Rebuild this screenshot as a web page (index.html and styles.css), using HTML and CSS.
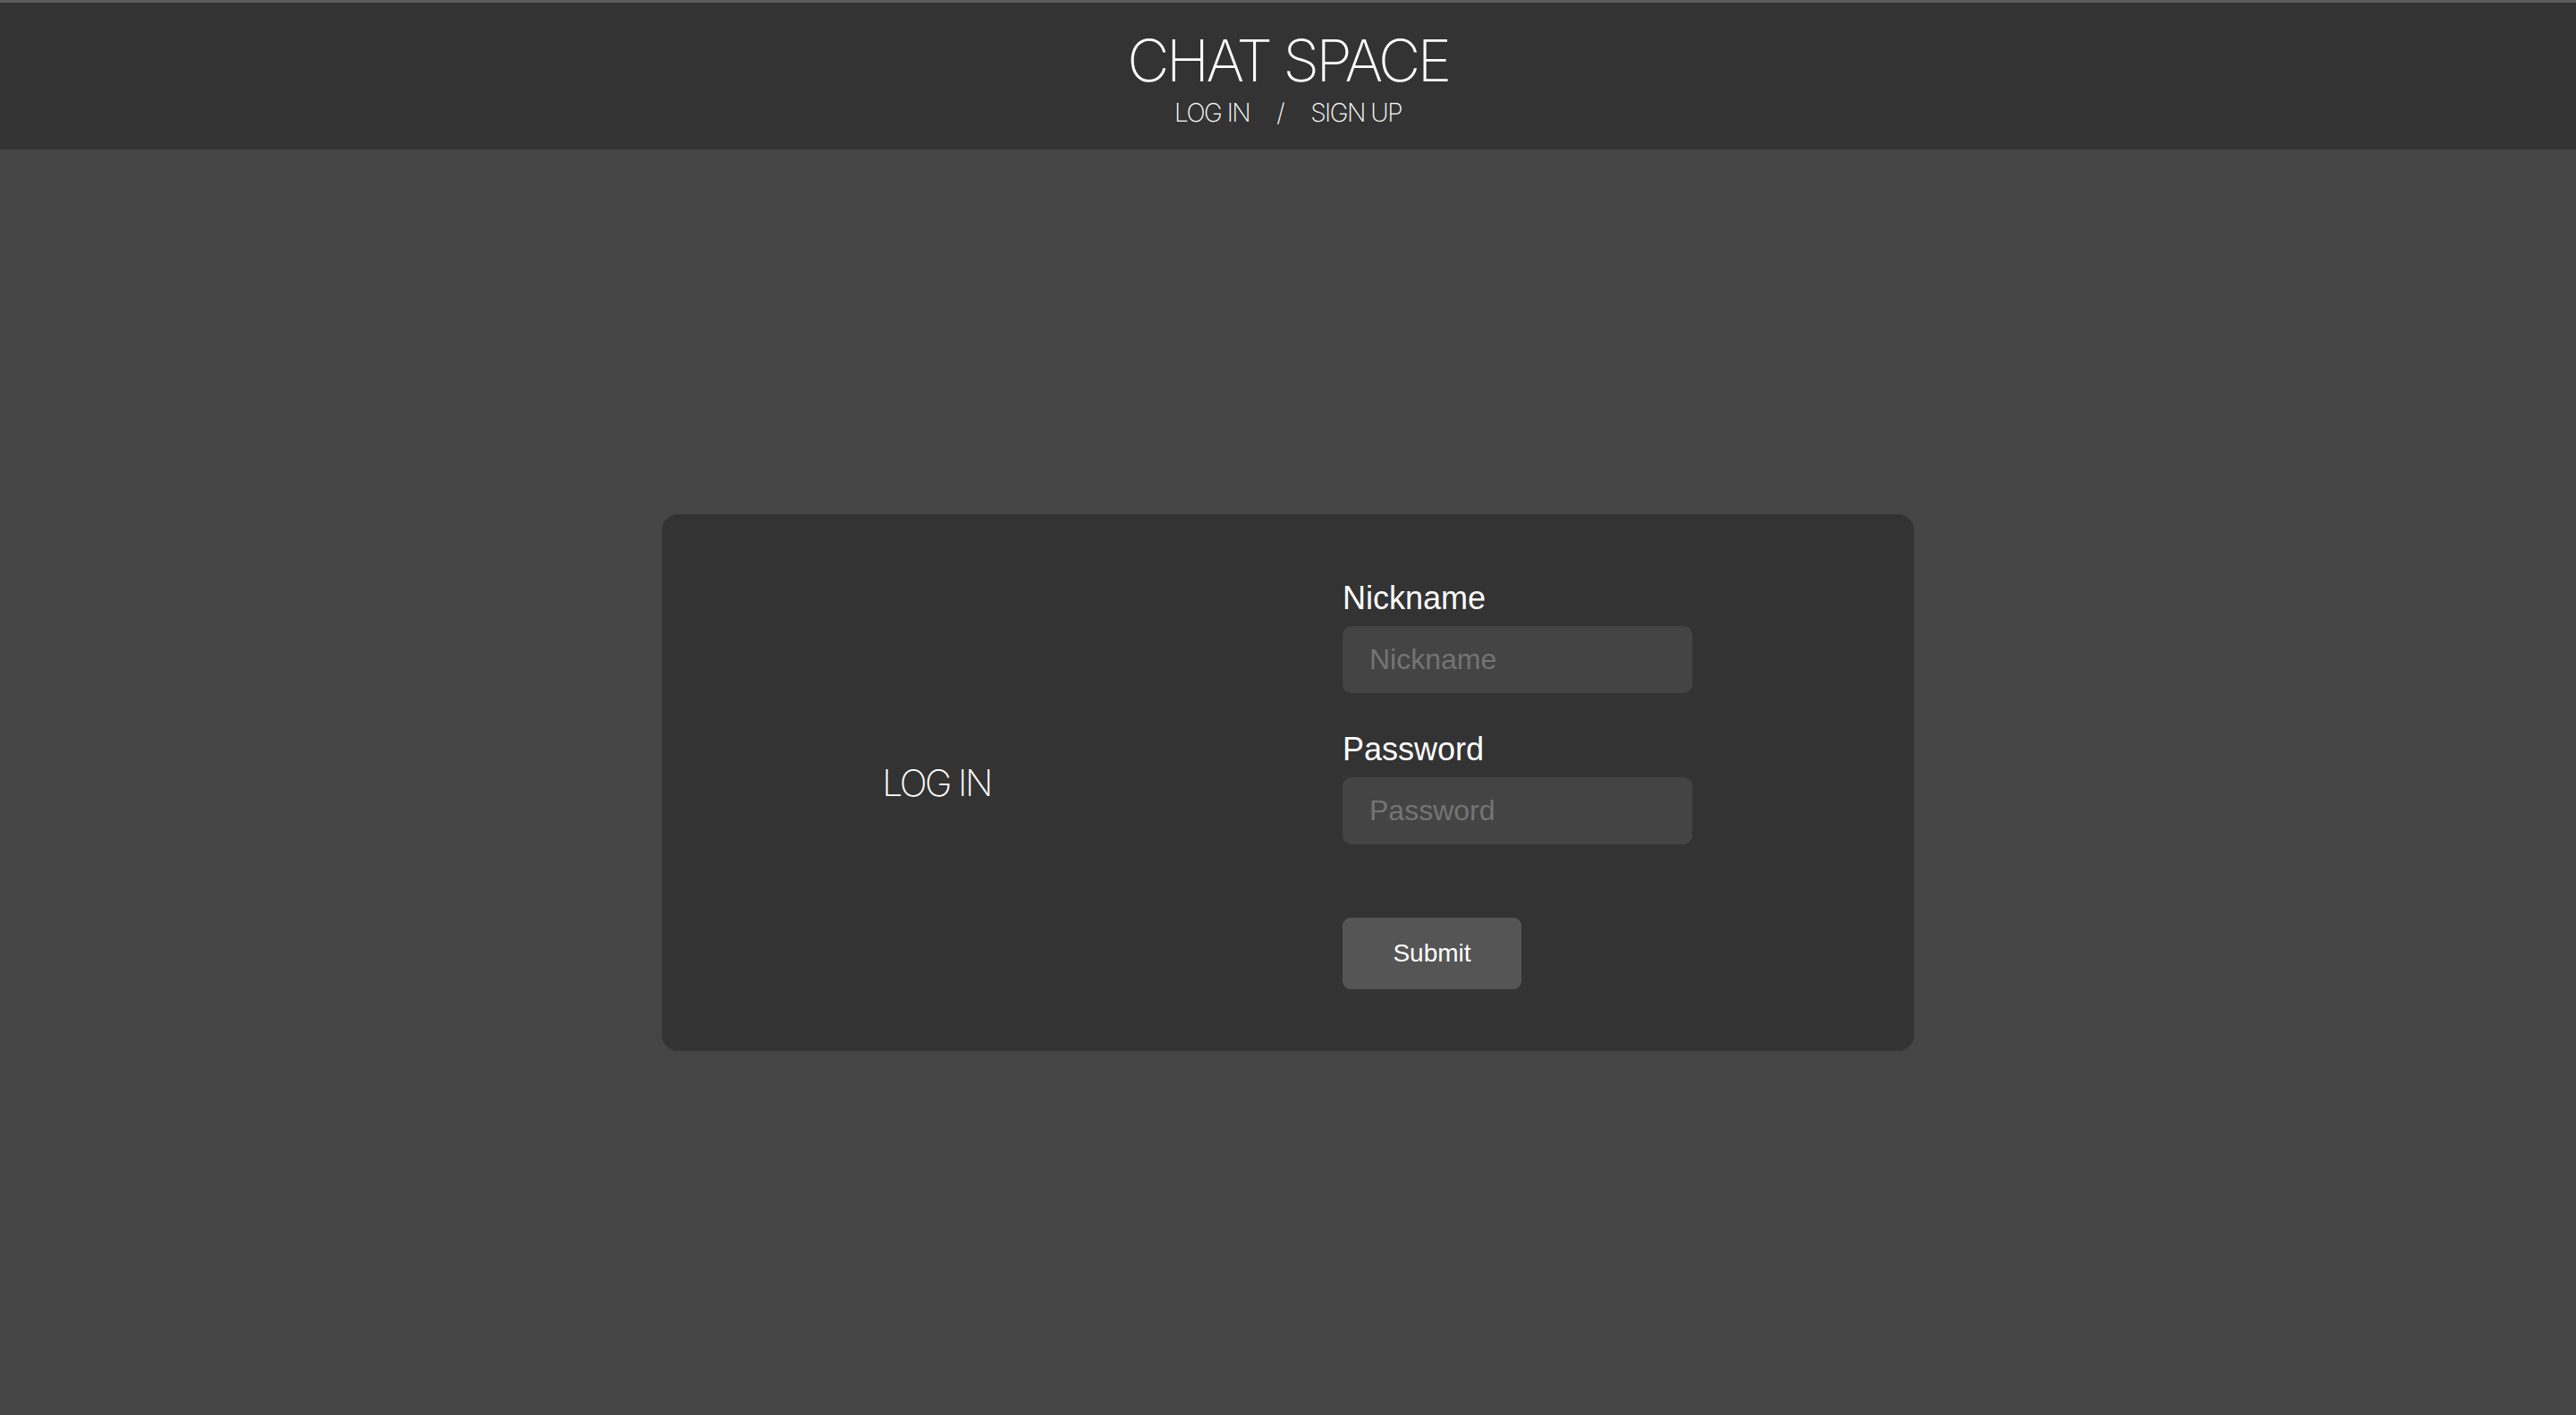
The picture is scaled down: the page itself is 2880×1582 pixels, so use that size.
FILE: index.html
```html
<!DOCTYPE html>
<html lang="en">
<head>
<meta charset="utf-8">
<title>Chat Space</title>
<link rel="stylesheet" href="styles.css">
</head>
<body>
<header class="site-header">
  <h1 class="site-title">CHAT SPACE</h1>
  <nav class="site-nav">
    <a class="nav-link" href="#">LOG IN</a>
    <span class="nav-sep">/</span>
    <a class="nav-link" href="#">SIGN UP</a>
  </nav>
</header>
<main class="main">
  <section class="card">
    <div class="card-side">
      <h2 class="card-heading">LOG IN</h2>
    </div>
    <form class="login-form">
      <div class="field">
        <label class="field-label" for="nickname">Nickname</label>
        <input class="field-input" id="nickname" type="text" placeholder="Nickname">
      </div>
      <div class="field">
        <label class="field-label" for="password">Password</label>
        <input class="field-input" id="password" type="password" placeholder="Password">
      </div>
      <button class="submit-btn" type="button">Submit</button>
    </form>
  </section>
</main>
</body>
</html>
```
FILE: styles.css
```css
html, body {
  margin: 0;
  padding: 0;
}

body {
  min-height: 100vh;
  display: flex;
  flex-direction: column;
  background: #454545;
  font-family: "Liberation Sans", Arial, sans-serif;
  color: #fff;
}

.site-header {
  border-top: 3px solid #5a5b5f;
  background: #333;
  height: 164px;
  display: flex;
  flex-direction: column;
  align-items: center;
}

.site-title {
  margin: 32px 0 0;
  font-family: "Inter", "Roboto", "Lato", sans-serif;
  font-weight: 200;
  font-size: 65px;
  line-height: 66px;
  letter-spacing: -3.4px;
  color: #fff;
}

.site-nav {
  margin-top: 10px;
  display: flex;
  align-items: baseline;
  gap: 30px;
  font-family: "Inter", "Roboto", "Lato", sans-serif;
  font-weight: 200;
  font-size: 28px;
  line-height: 30px;
  letter-spacing: -1.5px;
}

.nav-link {
  color: #fff;
  text-decoration: none;
}

.nav-sep {
  color: #fff;
}

.main {
  flex: 1;
  display: flex;
  align-items: center;
  justify-content: center;
}

.card {
  width: 1400px;
  height: 600px;
  background: #333;
  border-radius: 18px;
  display: flex;
  align-items: center;
}

.card-side {
  width: 614px;
  display: flex;
  justify-content: center;
}

.card-heading {
  margin: 0;
  font-family: "Inter", "Roboto", "Lato", sans-serif;
  font-weight: 200;
  font-size: 41px;
  line-height: 50px;
  letter-spacing: -2.5px;
  color: #fff;
}

.login-form {
  padding-top: 4px;
  padding-left: 147px;
  display: flex;
  flex-direction: column;
}

.field {
  display: flex;
  flex-direction: column;
}

.field + .field {
  margin-top: 42px;
}

.field-label {
  font-size: 36px;
  line-height: 41px;
  margin-bottom: 11px;
  color: #fff;
}

.field-input {
  width: 391px;
  height: 75px;
  box-sizing: border-box;
  border: none;
  outline: none;
  border-radius: 10px;
  background: #444;
  padding: 0 30px;
  font-family: "Liberation Sans", Arial, sans-serif;
  font-size: 32px;
  color: #fff;
}

.field-input::placeholder {
  color: #747474;
}

.submit-btn {
  margin-top: 82px;
  width: 200px;
  height: 80px;
  border: none;
  border-radius: 9px;
  background: #555;
  color: #fff;
  font-family: "Liberation Sans", Arial, sans-serif;
  font-size: 28px;
  cursor: pointer;
}
```
